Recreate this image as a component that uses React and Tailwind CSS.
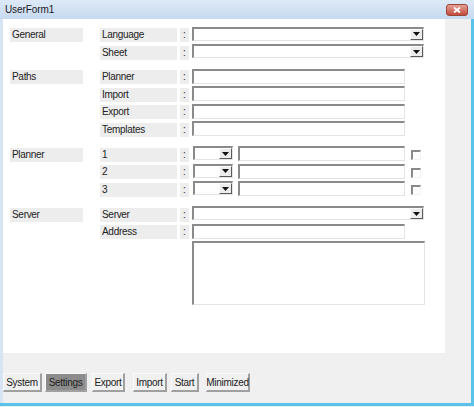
import React from "react";

const font = { fontFamily: '"Liberation Sans", Arial, sans-serif' };

function Arrow() {
  return (
    <div className="w-[13px] h-full bg-[#ececec] border-t border-l border-t-white border-l-white border-b border-r border-b-[#5a5a5a] border-r-[#5a5a5a] flex items-center justify-center">
      <svg width="7" height="4" viewBox="0 0 7 4">
        <polygon points="0,0 7,0 3.5,4" fill="#111" />
      </svg>
    </div>
  );
}

function Sunken({ w, h = 15, children }) {
  return (
    <div
      className="bg-white border-t-2 border-l-2 border-t-[#8a8a8a] border-l-[#8a8a8a] border-b border-r border-b-[#e4e4e4] border-r-[#e4e4e4] flex justify-end"
      style={{ width: w, height: h }}
    >
      {children}
    </div>
  );
}

function Combo({ w }) {
  return (
    <Sunken w={w} h={14}>
      <Arrow />
    </Sunken>
  );
}

function Check() {
  return (
    <div className="ml-[6px] mt-[4px] w-[10px] h-[10px] bg-white border-t-2 border-l-2 border-t-[#8a8a8a] border-l-[#8a8a8a] border-b border-r border-b-[#f2f2f2] border-r-[#f2f2f2]" />
  );
}

function Row({ group, label, children }) {
  return (
    <div className="flex h-[17.5px] shrink-0">
      <div className="ml-[7px] w-[73px]">
        {group && (
          <div className="mt-[1.5px] h-[14px] bg-[#ededed] pl-[2px] leading-[14px] text-[10px] tracking-[-0.3px] text-[#222]">
            {group}
          </div>
        )}
      </div>
      <div className="ml-[17px] w-[77px] mt-[1.5px] h-[14px] bg-[#ededed] pl-[2px] leading-[14px] text-[10px] tracking-[-0.3px] text-[#222]">
        {label}
      </div>
      <div className="ml-[3px] w-[9px] mt-[1.5px] h-[14px] bg-[#ededed] leading-[14px] text-[10px] text-center text-[#222]">
        :
      </div>
      <div className="ml-[3px] flex items-start">{children}</div>
    </div>
  );
}

function Btn({ children, active, className = "" }) {
  return (
    <div
      className={
        "h-[19px] flex items-center justify-center text-[10px] tracking-[-0.3px] text-[#222] border-t border-l border-t-[#fafafa] border-l-[#fafafa] border-b-2 border-r-2 border-b-[#a0a0a0] border-r-[#a0a0a0] " +
        (active ? "bg-[#8c8c8c] " : "bg-[#f0f0f0] ") +
        className
      }
    >
      {children}
    </div>
  );
}

export default function App() {
  return (
    <div className="w-[474px] h-[407px] bg-[#d6e4f4] flex flex-col" style={font}>
      <div className="h-[19px] shrink-0 flex items-center justify-between bg-gradient-to-b from-[#dde9f7] to-[#c7daf0]">
        <span className="ml-[5px] text-[10px] text-[#1a1a1a] tracking-[-0.1px]">UserForm1</span>
        <div className="mr-[6px] mt-[1px] w-[22px] h-[12px] rounded-[3px] border border-[#9c4438] bg-gradient-to-b from-[#e5a195] to-[#c0483b] flex items-center justify-center">
          <svg width="8" height="6" viewBox="0 0 8 6">
            <path d="M1 0.5 L7 5.5 M7 0.5 L1 5.5" stroke="white" strokeWidth="1.8" />
          </svg>
        </div>
      </div>
      <div className="flex-1 flex border-b-[3px] border-b-[#5bc2ea]">
        <div className="w-[3px]" />
        <div className="flex-1 bg-[#f0f0f0] flex flex-col">
          <div className="flex h-[334px]">
            <div className="w-[442px] bg-white flex flex-col pt-[7.7px]">
              <Row group="General" label="Language">
                <Combo w={232} />
              </Row>
              <Row label="Sheet">
                <Combo w={232} />
              </Row>
              <div className="h-[7.3px] shrink-0" />
              <Row group="Paths" label="Planner">
                <Sunken w={213} />
              </Row>
              <Row label="Import">
                <Sunken w={213} />
              </Row>
              <Row label="Export">
                <Sunken w={213} />
              </Row>
              <Row label="Templates">
                <Sunken w={213} />
              </Row>
              <div className="h-[7.3px] shrink-0" />
              {["1", "2", "3"].map((n, i) => (
                <Row key={n} group={i === 0 ? "Planner" : null} label={n}>
                  <div className="ml-[1px]">
                    <Combo w={40} />
                  </div>
                  <div className="ml-[5px]">
                    <Sunken w={167} />
                  </div>
                  <Check />
                </Row>
              ))}
              <div className="h-[7.3px] shrink-0" />
              <Row group="Server" label="Server">
                <Combo w={232} />
              </Row>
              <Row label="Address">
                <Sunken w={213} />
              </Row>
              <div className="flex">
                <div className="ml-[189px]">
                  <Sunken w={233} h={64} />
                </div>
              </div>
            </div>
          </div>
          <div className="flex pt-[20px]">
            <Btn className="w-[39px]">System</Btn>
            <Btn active className="ml-[3px] w-[42px]">Settings</Btn>
            <Btn className="ml-[5px] w-[33px]">Export</Btn>
            <Btn className="ml-[8px] w-[34px]">Import</Btn>
            <Btn className="ml-[4px] w-[28px]">Start</Btn>
            <Btn className="ml-[7px] w-[44px]">Minimized</Btn>
          </div>
        </div>
        <div className="w-[3px] bg-[#5bc2ea]" />
      </div>
      <div className="h-[1px] bg-[#e8eef5]" />
    </div>
  );
}
